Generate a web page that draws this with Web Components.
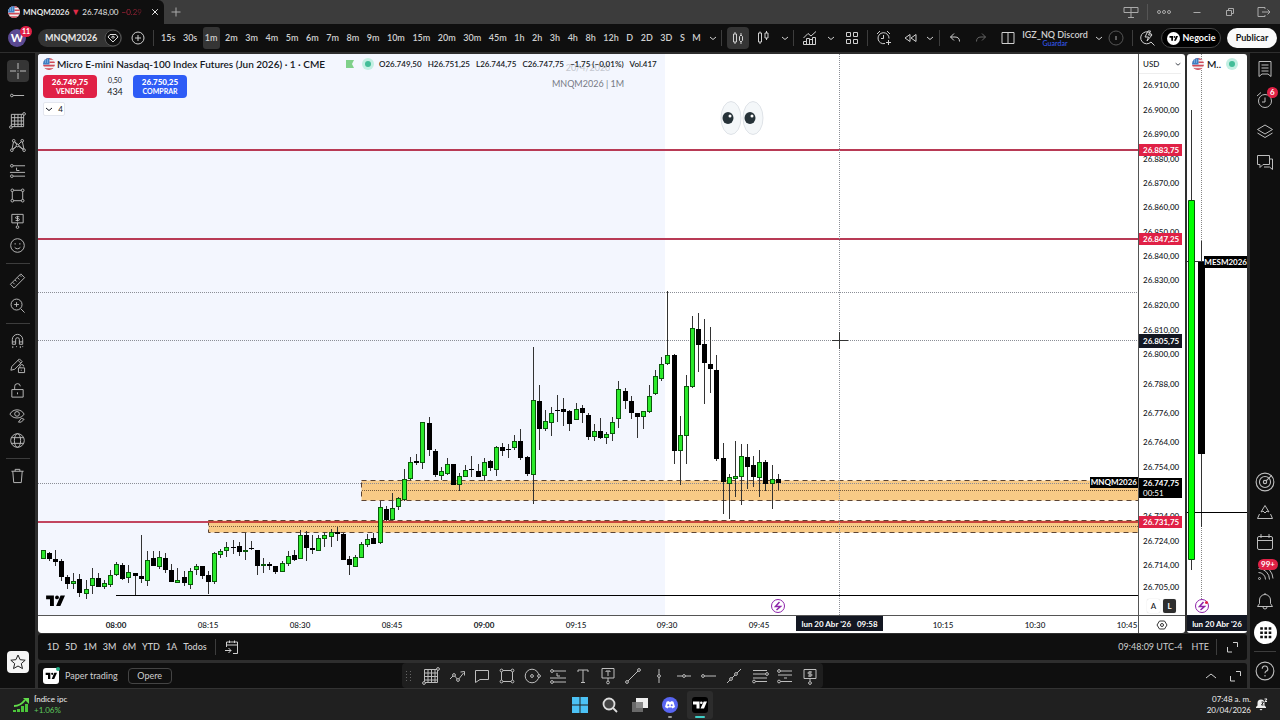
<!DOCTYPE html>
<html lang="es">
<head>
<meta charset="utf-8">
<meta name="viewport" content="width=device-width, initial-scale=1">
<title>MNQM2026 26.748,00</title>
<style>
html, body { margin: 0; height: 100%; }
body { background: #2e2e2e; color: #dbdbdb; font: 9px/12px Lato, "Open Sans", sans-serif; overflow: hidden; }
</style>
</head>
<body>
<trade-app></trade-app>
<script>
const RESET = `
*, *::before { box-sizing: border-box; }
button, select, a { font: inherit; color: inherit; background: none; border: 0; padding: 0; margin: 0; text-decoration: none; appearance: none; }
button { display: inline-flex; align-items: center; justify-content: center; flex: none; white-space: nowrap; cursor: pointer; }
.sep { flex: none; width: 1px; height: 16px; background: #3d3d3d; }
`;
function define(name, css, html, setup) {
  const tpl = document.createElement('template');
  tpl.innerHTML = `<style>${RESET}${css}</style>${html}`;
  customElements.define(name, class extends HTMLElement {
    constructor() {
      super();
      this.attachShadow({ mode: 'open' }).append(tpl.content.cloneNode(true));
    }
    connectedCallback() { if (setup) setup(this, this.shadowRoot); }
  });
}

/* Line icons on an 18 unit grid */
const n = (x, y) => `<circle cx="${x}" cy="${y}" r="1.4" fill="var(--hole, #0f0f0f)"/>`;
const ICONS = {
  cross: '<path d="M9 1v6M9 11v6M1 9h6M11 9h6M9 8.5v1"/>',
  ray: '<path d="M4 9h12"/>' + n(3, 9),
  grid: '<path d="M2.5 2.5h13v13h-13zM6 2.5v13M9.500 2.500v13M13 2.500v13M2.500 6h13M2.500 9.500h13M2.500 13h13"/>' + n(16, 2) + n(2, 16),
  pattern: '<path d="M3 14 5 4l4 5 5-5 2 10-7-5zM3 14l6-5M5 4l11 10"/>' + n(5, 4) + n(14, 4) + n(3, 14) + n(16, 14) + n(9, 9),
  fib: '<path d="M4 4h13M4 15h13M1 11h16M8 6v3h3"/>' + n(3, 4) + n(3, 15),
  rect: '<path d="M3.500 3.500h11v11h-11z"/>' + n(3.5, 3.5) + n(14.5, 3.5) + n(3.5, 14.5) + n(14.5, 14.5),
  price: '<path d="M3 2.500h12v9H3zM9 11.500V14M11 5H8a1 1 0 0 0 0 2h2a1 1 0 0 1 0 2H7M9 4v6"/>' + n(9, 16),
  smile: '<circle cx="9" cy="9" r="7.200"/><path d="M6 11c1.500 2 4.500 2 6 0M6.500 6.500v1.500M11.500 6.500v1.500"/>',
  ruler: '<path d="m1.500 13 11-11 4 4-11 11zM4 11l2 2M6.500 8.500l1.500 1.500M9 6l2 2M11.500 3.500 13 5"/>',
  zoomin: '<circle cx="8" cy="8" r="5.800"/><path d="m12.500 12.500 4 4M8 5.500v5M5.500 8h5"/>',
  magnet: '<path d="M3.500 13V8a5.500 5.500 0 0 1 11 0v5h-3.500V8a2 2 0 0 0-4 0v5zM3.500 10.500H7M11 10.500h3.500M4 15v2M8 15v1M12 15v2M14.500 15v1"/>',
  penlock: '<path d="m2 14 1-4 8-8 3 3-8 8zM9.500 3.500l3 3M10 11.500h6.500v5H10zM11.500 11.500V10a2 2 0 0 1 4 0M13 13.500v1"/>',
  lock: '<path d="M3 8h12v8H3zM6 8V5a3 3 0 0 1 6-.5M9 11v2"/>',
  eye: '<path d="M1 7.500C4 1.500 13 1.500 16 7.500 13 13 4 13 1 7.500zM10 16l3-4 3 1-3 3z"/><circle cx="8.500" cy="7.300" r="2.500"/>',
  globe: '<circle cx="9" cy="9" r="7.200"/><ellipse cx="9" cy="9" rx="3.300" ry="7.200"/><path d="M2.500 6h13M2.500 12h13"/>',
  trash: '<path d="M2.500 4.500h13M6.500 4.500V2.500h5v2M4 4.500l1 12h8l1-12"/>',
  star: '<path d="m9 2 2.100 4.700 5.100.5-3.900 3.400 1.200 5L9 13l-4.500 2.600 1.200-5L1.800 7.200l5.100-.5z"/>',
  list: '<path d="M3 1.500h12v15l-3-2.500H6l-3 2.500zM5.500 5h7M5.500 8h7M5.500 11h7"/>',
  alarm: '<circle cx="9" cy="10" r="6.500"/><path d="M9 6.500V11H6M1 5l4-3.500M17 5l-4-3.500"/>',
  alarmplus: '<path d="M10 14.500A5.500 5.500 0 1 1 14 9.500M8.500 6v3.500H6M2 5l3-3M15 5l-3-3M13.500 11v5M11 13.500h5"/>',
  layers: '<path d="m9 3 7.500 4.500L9 12 1.500 7.500zM1.500 11 9 15.500 16.500 11"/>',
  chat: '<path d="M1.500 2.500h12v9H7l-3 3v-3H1.500zM13.500 6h3v10.500L13.500 14H8"/>',
  target: '<circle cx="9" cy="9" r="8"/><circle cx="9" cy="9" r="5"/><circle cx="9" cy="9" r="1.500"/><path d="m10 8 5-5"/>',
  peaks: '<path d="m5 9 4-6.500L13 9l-2-1-2 2-2-2zM3.500 11 1.500 15.500h15L14.500 11"/>',
  calendar: '<rect x="1.500" y="3.500" width="15" height="13" rx="1.500"/><path d="M1.500 7.500h15M5 1v4M13 1v4"/>',
  feed: '<path d="M2.500 5.500a11 11 0 0 1 11 11M2.500 9.500a7 7 0 0 1 7 7M6 2.500a14 14 0 0 1 11 13"/><circle cx="3.500" cy="15.500" r="1"/>',
  bell: '<path d="M1.500 13.500h15L14.500 10.500V7a5.500 5.500 0 0 0-11 0v3.500zM7 14a2 2 0 0 0 4 0M9 1.500V0"/>',
  apps: '<g fill="#0f0f0f" stroke="none"><path d="M4 4h2.500v2.500H4zM8 4h2.500v2.500H8zM12 4h2.500v2.500H12zM4 8h2.500v2.500H4zM8 8h2.500v2.500H8zM12 8h2.500v2.500H12zM4 12h2.500v2.500H4zM8 12h2.500v2.500H8zM12 12h2.500v2.500H12z"/></g>',
  help: '<circle cx="9" cy="9" r="8"/><path d="M6.500 7a2.500 2.500 0 1 1 3.500 2.300c-.7.400-1 .7-1 1.700M9 12.500V14"/>',
  chevron: '<path d="m6 8 3 2.500L12 8"/>',
  up: '<path d="m4 11 5-4 5 4"/>',
  plus: '<path d="M9 4.500v9M4.500 9h9"/>',
  pluscircle: '<circle cx="9" cy="9" r="6"/><path d="M9 6v6M6 9h6"/>',
  gem: '<circle cx="9" cy="9" r="8" fill="#0f0f0f" stroke="#555"/><path d="m6 5.500h6l2 2.500-5 5-5-5zM7.500 8 9 9.500 10.500 8 9 7z"/>',
  candles: '<path d="M4.500 5h3v8h-3zM6 3v2M6 13v2M10.500 7.500 12 6l1.500 1.500v4L12 13l-1.500-1.500zM12 4v2M12 13v2"/>',
  hollow: '<path d="M4.500 4h3v9h-3zM6 2.500V4M6 13v2M11 4h3v5h-3zM12.500 2v2M12.500 9v2"/>',
  indicators: '<path d="M2.500 15.500v-3h3v-3h3v1h3v-2h3v7zM5.500 12v3.500M8.500 10v5.500M11.500 9v6.500M2.500 9 7 4.500l3 2.500 5-4.500"/>',
  squares: '<path d="M3.500 3.500h4v4h-4zM10.500 3.500h4v4h-4zM3.500 10.500h4v4h-4zM10.500 10.500h4v4h-4z"/>',
  rewind: '<path d="M9 5.500v7L4 9zM15 5.500v7L10 9z"/>',
  undo: '<path d="M8 4.500 4.500 8 8 11.500M4.500 8H9c3 0 4.500 1.500 4.500 4.500"/>',
  redo: '<path d="M10 4.500 13.500 8 10 11.500M13.500 8H9c-3 0-4.500 1.500-4.500 4.500"/>',
  layout: '<path d="M3 3.500h12v11H3zM9 3.500v11"/>',
  info: '<circle cx="9" cy="9" r="7" stroke="#555"/><path d="M9 7v4"/>',
  quick: '<path d="M14 6A6 6 0 1 0 13 13l3.500 3.500M10 2 7 8h3.500L9 12l5-6h-3.500l2-4z"/>',
  screens: '<path d="M2 4.500h14v5H2zM9 4.500v10M6 14.500h6"/>',
  dots: '<circle cx="4" cy="9" r="1.500"/><circle cx="9" cy="9" r="1.500"/><circle cx="14" cy="9" r="1.500"/>',
  min: '<path d="M5.500 9.500h7"/>',
  restore: '<path d="M5.500 7.500h5v5h-5zM7.500 7V5.500h5v5H11"/>',
  exit: '<path d="M11 6V4.500H4v9h7V12M8 9h8M13.500 6.500 16 9l-2.500 2.500"/>',
  close: '<path d="m6.200 6.200 5.600 5.600M11.800 6.200l-5.600 5.600"/>',
  goto: '<path d="M4.500 9V4h11v11.500H11M4.500 7h11M7.500 2.500V5M12.500 2.500V5M3 12.500h6M6.500 10l2.500 2.500L6.500 15"/>',
  expand: '<path d="M10 4.500h4.500V9M4.500 9v5H9"/>',
  path: '<path d="m2 12 4-4 4 5 5.500-7M12.500 5l4-.5v4"/>' + n(6, 8) + n(10, 13),
  note: '<path d="M2.500 3.500h13v9H7l-4.500 3z"/>',
  circle: '<circle cx="9" cy="9" r="6.800"/>' + n(9, 9) + n(16, 9),
  text: '<path d="M4 5V3h10v2M9 3v12.500M7 15.500h4"/>',
  textbox: '<path d="M3 1.500h12v9.500H3zM7 5V4h4v1M9 4v5M9 11v3"/>' + n(9, 15.5),
  trend: '<path d="M3 15 15 3"/>' + n(3, 15) + n(15, 3),
  vline: '<path d="M9 2v14"/>' + n(9, 9),
  hline: '<path d="M2 9h14"/>' + n(9, 9),
  extended: '<path d="M2 16 16 2"/>' + n(6, 12) + n(11, 7),
  levels: '<path d="M2 3.500h14M2 7h14M2 11h14M4 14.500h12"/>' + n(16, 7) + n(3, 14.5),
  channel: '<path d="M4 4h12M2 8h14M8 11h3M4 14.500h12"/>' + n(3, 4) + n(3, 14.5),
  grip: '<g fill="#666" stroke="none"><path d="M6 4h1v1H6zM10 4h1v1h-1zM6 7h1v1H6zM10 7h1v1h-1zM6 10h1v1H6zM10 10h1v1h-1zM6 13h1v1H6zM10 13h1v1h-1z"/></g>',
  hex: '<path d="M6.500 5h5l2.500 4-2.500 4h-5L4 9z"/><circle cx="9" cy="9" r="1.500"/>',
  tv: '<g fill="currentColor" stroke="none"><path d="M1 4h7v9.500H4.500V7.500H1zM14 4h4l-4.200 9.500H10z"/><circle cx="10.800" cy="5.800" r="1.700"/></g>',
  bolt: '<circle cx="9" cy="9" r="6.500"/><path d="M10.500 5 6.500 9.500h5L7.500 13" stroke-width="1.500"/>',
};
customElements.define('line-icon', class extends HTMLElement {
  connectedCallback() {
    if (this.shadowRoot) return;
    const s = +this.getAttribute('size') || 18;
    this.attachShadow({ mode: 'open' }).innerHTML = `<style>:host{display:inline-flex;flex:none}svg{display:block;fill:none;stroke:currentColor;stroke-width:1}</style><svg width="${s}" height="${s}" viewBox="0 0 18 18" aria-hidden="true">${ICONS[this.getAttribute('name')]}</svg>`;
  }
});
define('us-flag', ':host{display:inline-flex;flex:none}', `
<svg width="12" height="12" viewBox="0 0 12 12" aria-hidden="true"><defs><clipPath id="c"><circle cx="6" cy="6" r="6"/></clipPath></defs>
<g clip-path="url(#c)"><path fill="#f0eef0" d="M0 0h12v12H0z"/><path fill="#cf4a57" d="M0 0h12v1.700H0zM0 3.400h12v1.700H0zM0 6.800h12v1.700H0zM0 10.200h12V12H0z"/><path fill="#3c7fc4" d="M0 0h6.500v6.500H0z"/><path stroke="#a9cdec" stroke-dasharray="1 1" d="M0 2h6.500M0 4h6.500"/></g></svg>`);

define('title-bar', `
:host { display: flex; align-items: center; height: 24px; flex: none; background: #3c3c3c; color: #aaa; }
.tab { display: flex; align-items: center; align-self: stretch; width: 164px; padding: 0 0 0 8px; background: #0f0f0f; color: #e6e6e6; border-radius: 0 6px 0 0; font-size: 8px; }
b { margin-left: 3px; }
.down { color: #e02b48; width: 13px; text-align: center; font-size: 9px; }
.pct { margin: 0 auto 0 3px; white-space: nowrap; background: linear-gradient(90deg, #e02b48, #5a1a24); background-clip: text; -webkit-background-clip: text; color: transparent; }
.fill { flex: 1; }
.win { display: flex; align-items: center; gap: 15px; padding-right: 8px; }
.sep { background: #555; margin: 0 -8px; }
`, `<div class="tab"><us-flag></us-flag><b>MNQM2026</b><span class="down">▼</span><span>26.748,00</span><span class="pct">−0.29</span><button aria-label="Cerrar"><line-icon name="close"></line-icon></button></div>
<button aria-label="Nueva" style="width:24px"><line-icon name="plus"></line-icon></button><span class="fill"></span>
<div class="win"><button><line-icon name="screens"></line-icon></button><span class="sep"></span><button><line-icon name="dots"></line-icon></button><button><line-icon name="min"></line-icon></button><button><line-icon name="restore"></line-icon></button><button><line-icon name="exit"></line-icon></button></div>`);

define('top-toolbar', `
:host { display: flex; align-items: center; height: 28px; flex: none; background: #0f0f0f; color: #d0d0d0; padding: 0 3px 0 8px; font-weight: 500; }
.avatar { position: relative; width: 18px; height: 18px; border-radius: 50%; background: #5b4a93; color: #fff; font-size: 12px; font-weight: 700; }
.avatar i { position: absolute; right: -6px; top: -3px; padding: 0 2px; border-radius: 6px; background: #e02146; font: 700 7px/11px Lato, sans-serif; }
.symbol { width: 84px; height: 18px; margin-left: 12px; border-radius: 9px; background: #333; font-weight: 700; justify-content: space-between; padding-left: 7px; color: #e6e6e6; }
.symbol line-icon { color: #ddd; }
.ints { display: flex; justify-content: space-between; width: 544px; margin: 0 2px 0 5px; }
.ints button { height: 22px; padding: 0 2px; border-radius: 3px; font-weight: 600; }
.ints .on, .on { background: #353535; }
.candle { width: 22px; height: 22px; border-radius: 4px; }
.fill { flex: 1; }
.name { display: grid; text-align: center; line-height: 9px; font-weight: 600; width: 66px; white-space: nowrap; }
.name small { font-size: 7px; line-height: 8px; color: #2f51e0; }
.neg { width: 60px; height: 20px; border: 1px solid #444; border-radius: 10px; background: #000; color: #fff; font-weight: 700; gap: 3px; }
.neg span { display: flex; border-radius: 50%; background: #fff; color: #000; padding: 2px; }
.pub { width: 50px; height: 20px; border-radius: 10px; background: #fafafa; color: #111; font-weight: 700; margin-left: 6px; }
.dim { color: #666; }
`, `<button class="avatar">W<i>11</i></button><button class="symbol">MNQM2026<line-icon name="gem"></line-icon></button>
<button style="width:31px"><line-icon name="pluscircle"></line-icon></button><span class="sep"></span>
<div class="ints"></div><button style="width:16px" aria-label="Intervalos"><line-icon name="chevron"></line-icon></button>
<span class="sep"></span><button class="candle on" style="margin-left:5px"><line-icon name="candles"></line-icon></button><button style="width:28px"><line-icon name="hollow"></line-icon></button><button style="width:16px"><line-icon name="chevron"></line-icon></button>
<span class="sep"></span><button style="width:32px"><line-icon name="indicators"></line-icon></button><button style="width:10px"><line-icon name="chevron"></line-icon></button><button style="width:31px"><line-icon name="squares"></line-icon></button>
<span class="sep"></span><button style="width:31px"><line-icon name="alarmplus"></line-icon></button><button style="width:21px"><line-icon name="rewind"></line-icon></button><button style="width:19px"><line-icon name="chevron"></line-icon></button>
<span class="sep"></span><button style="width:30px"><line-icon name="undo"></line-icon></button><button class="dim" style="width:21px"><line-icon name="redo"></line-icon></button><span class="fill"></span>
<button style="width:28px"><line-icon name="layout"></line-icon></button><button class="name"><span>IGZ_NQ Discord</span><small>Guardar</small></button><button style="width:21px"><line-icon name="chevron"></line-icon></button><button style="width:14px;color:#aaa"><line-icon name="info"></line-icon></button>
<span class="sep" style="margin-left:9px"></span><button style="width:28px"><line-icon name="quick"></line-icon></button>
<button class="neg"><span><line-icon name="tv" size="9"></line-icon></span>Negocie</button><button class="pub">Publicar</button>`,
(_, root) => {
  root.querySelector('.ints').innerHTML = '15s 30s 1m 2m 3m 4m 5m 6m 7m 8m 9m 10m 15m 20m 30m 45m 1h 2h 3h 4h 8h 12h D 2D 3D S M'
    .split(' ').map(t => `<button${t === '1m' ? ' class="on"' : ''}>${t}</button>`).join('');
});

define('tool-rail', `
:host { display: flex; flex-direction: column; align-items: center; width: 35px; flex: none; background: #0f0f0f; color: #bdbdbd; padding: 5px 0 15px; }
.tools { display: flex; flex-direction: column; align-items: center; flex: 1; }
.tools button { width: 25px; height: 25px; }
.on line-icon { background: #353535; border-radius: 4px; padding: 2px; }
hr { width: 24px; height: 1px; border: 0; margin: 5px 0 4px; background: #3d3d3d; flex: none; }
`, `<div class="tools"></div><slot></slot>`,
(_, root) => {
  const names = 'cross ray grid pattern fib rect price smile | ruler zoomin | magnet penlock lock eye globe | trash'.split(' ');
  root.querySelector('.tools').innerHTML = names.map(k => k === '|' ? '<hr>' : `<button aria-label="${k}"${k === 'cross' ? ' class="on"' : ''}><line-icon name="${k}"${k === 'cross' ? '' : ' size="17"'}></line-icon></button>`).join('');
});

define('side-rail', `
:host { display: flex; flex-direction: column; align-items: center; width: 30px; flex: none; background: #0f0f0f; color: #bdbdbd; padding: 1px 0 2px; }
button { width: 30px; height: 30px; position: relative; }
.top { display: grid; grid-auto-rows: 31px; }
i { position: absolute; left: 17px; top: 2px; padding: 0 3px; border-radius: 6px; background: #e02146; color: #fff; font: 700 8px/11px Lato, sans-serif; }
.wide { left: 8px; }
.fill { flex: 1; }
.apps line-icon { background: #fff; border-radius: 50%; padding: 2px; }
hr { width: 22px; height: 1px; border: 0; margin: 4px 0; background: #3d3d3d; flex: none; }
`, `<div class="top"><button><line-icon name="list"></line-icon></button><button><line-icon name="alarm"></line-icon><i>6</i></button><button><line-icon name="layers"></line-icon></button><button><line-icon name="chat"></line-icon></button></div>
<span class="fill"></span>
<button><line-icon name="target" size="20"></line-icon></button><button><line-icon name="peaks"></line-icon></button><button><line-icon name="calendar"></line-icon></button><button><line-icon name="feed"></line-icon><i class="wide">99+</i></button><button><line-icon name="bell"></line-icon></button><button class="apps"><line-icon name="apps" size="19"></line-icon></button><hr><button><line-icon name="help" size="20"></line-icon></button>`);

/* Candles run minute by minute from 07:48. Each row is
   colour, high, body top, body bottom, low, in thirds of a unit below the block's base. */
const BLOCKS = [
  [380, 'G510 510 536 536,B516 519 537 543,B510 537 545 557,B537 543 590 603,B585 591 611 626,G578 603 611 628,B582 597 638 651,G600 626 641 656,G564 594 617 641,B578 594 620 622,G600 608 622 628,G570 584 614 620,G547 552 584 588,B550 554 596 599,G555 576 594 609,B578 580 588 645,B464 588 597 609,G513 541 602 619,B513 534 557 558,G513 531 560 567,B519 534 571 579,B553 570 605 607,G563 599 608 608,B572 590 608 617,G565 574 615 626,G553 558 570 586,B558 558 588 596,B574 586 605 643,G517 520 605 613,G508 514 525 533,G487 502 512 530,B480 501 504 521,B487 498 516 528,G458 510 517 541,B482 505 508 510,B510 510 558 585,G535 552 558 579,B545 551 559 569,B558 558 576 581,G543 550 575 575,G513 528 551 557,B510 525 540 543,G449 464 536 536,B452 465 503 543,B466 504 511 522,G466 475 514 514,G455 464 478 500,G448 457 472 501,B440 456 461 482,B458 461 540 540,B528 536 555 585,G524 531 560 560,G486 493 533 533,G462 476 495 502,B458 473 493 493'],
  [330, 'G513 531 639 643,B527 537 571 572,G489 533 571 571,G500 505 531 541,G417 447 511 513,G382 397 447 449,B373 394 399 404,G277 277 400 418,B260 280 360 378,B358 363 434 440,G410 424 437 449,G384 403 432 434,B402 402 465 465,G429 439 466 483,G406 419 440 442,B378 417 420 440,B403 423 440 442,G385 397 437 454,B390 394 413 423,G348 352 419 438,B340 352 363 378,B343 357 360 383,G314 332 353 360,B298 333 384 389,B378 381 432 437,G52 211 435 521,B166 212 297 360,G240 272 298 302,G230 248 279 319,B196 241 244 276,B204 238 245 287,B240 243 282 302,G220 237 269 270,B225 234 248 278,B250 256 321 330,G281 303 321 333,B265 304 324 328,G306 312 325 343,G262 275 311 333,G153 178 268 293,B173 184 212 237,B198 213 248 267,B249 249 262 325,G242 244 262 296,G165 199 245 250,G120 139 193 194,G82 103 146 152'],
  [280, 'G32 226 253 255,B222 225 512 553,G408 465 512 614,G284 317 469 553,G108 145 321 325,B99 147 194 275,B118 192 250 372,B140 252 268 338,B224 270 537 542,B490 534 606 702,G582 591 611 718,G484 589 596 652,G492 529 590 674,B492 531 560 626,B529 556 590 621,G510 545 593 650,B539 545 612 633,G554 597 611 686,B582 597 608 629'],
];
function drawCandles() {
  let i = -12, out = '';
  for (const [base, rows] of BLOCKS) for (const row of rows.split(',')) {
    const [h, t, b, l] = row.slice(1).split(' ').map(v => Math.round(base + v / 3));
    const x = Math.round(116.2 + 6.125 * i++);
    out += `<path d="M${x + .5} ${h}V${l}" stroke="#333"/>`;
    out += row[0] === 'G'
      ? `<rect x="${x - 1.5}" y="${t + .5}" width="4" height="${Math.max(1, b - t - 1)}" fill="#2bea2b" stroke="#0a5a0a"/>`
      : `<rect x="${x - 2}" y="${t}" width="5" height="${Math.max(1, b - t)}" fill="#000"/>`;
  }
  return out;
}

define('price-plot', `
:host { position: relative; display: block; min-width: 0; min-height: 0; background: #fff; color: #131722; overflow: hidden; }
.plot { position: absolute; inset: 0; width: 100%; height: 100%; }
.legend { position: relative; display: flex; align-items: center; height: 20px; padding-left: 5px; white-space: nowrap; }
h1 { font: 10px/14px Lato, sans-serif; font-weight: 600; margin: 0 2px; min-width: 287px; }
.ok { width: 6px; height: 6px; border-radius: 50%; background: #42bd98; box-shadow: 0 0 0 3px #c3efe3; margin: 0 8px 0 11px; }
.mk { width: 8px; height: 8px; background: #7fd08a; clip-path: polygon(0 0, 100% 0, 75% 50%, 100% 100%, 0 100%); }
.ohlc { display: flex; gap: 6px; font-size: 8px; font-weight: 600; }
.trade { position: relative; display: flex; align-items: center; margin: 1px 0 4px 5px; }
.trade button { display: grid; width: 54px; height: 23px; border-radius: 4px; color: #fff; background: #e02146; font: 700 7px/9px Lato, sans-serif; align-content: center; }
.trade button b { font-size: 8px; line-height: 9px; }
.trade .buy { background: #2e5cf6; }
.spread { width: 36px; text-align: center; font-size: 9px; line-height: 13px; }
.spread small { display: block; font-size: 7px; line-height: 10px; }
.more { position: relative; margin-left: 5px; width: 22px; height: 14px; background: #fff; border: 1px solid #e3e6ee; border-radius: 2px; font-size: 8px; }
.more line-icon { margin: 0 0 0 -5px; }
.mark { position: absolute; left: 50%; top: 6px; width: 120px; margin-left: -60px; text-align: center; color: #777b86; line-height: 16px; }
.mark span { display: block; color: #c4c7cf; }
.tv { position: absolute; left: 7px; bottom: 4px; color: #000; }
.bolt { position: absolute; left: 67.273%; bottom: 0; margin-left: -9px; color: #8e24aa; }
.tag { position: absolute; right: 0; top: 76.300%; margin-top: -5px; padding: 0 1px; background: #000; color: #fff; font: 700 8px/11px Lato, sans-serif; }
`, `<svg class="plot" viewBox="38 54 1100 561" preserveAspectRatio="none" fill="none">
<path fill="#f3f6fe" d="M38 54h627v561H38z"/>
<g fill="#f8ca86" stroke="#5c4433" stroke-dasharray="5 4"><path d="M361.500 480.500h780v20h-780zM208.500 520.500h940v12h-940z"/></g>
<path stroke="#b83a55" stroke-width="2" d="M38 150h1100M38 239h1100"/><path stroke="#c2455f" stroke-width="2" d="M38 522h171"/><path stroke="#c8463c" stroke-width="2" d="M208 522h930"/>
<path stroke="#000" d="M116 595.500h1022"/>
<g stroke="#8b8e96" stroke-dasharray="1 1"><path d="M38 292.500h1100M38 340.500h1100M38 483.500h1100M839.500 54v561"/><path stroke="#7a5c3a" d="M362 490.500h776M209 526.500h929"/></g>
<g class="candles"></g>
<path stroke="#333" d="M832 340.500h16M839.500 332v17"/>
<g stroke="#dfe3e8" fill="#f4f7f9"><ellipse cx="731" cy="118" rx="10" ry="16.500"/><ellipse cx="753" cy="118" rx="10" ry="16.500"/></g>
<g fill="#263238"><ellipse cx="728" cy="118" rx="5.500" ry="6"/><ellipse cx="750" cy="118" rx="5.500" ry="6"/></g><g fill="#fff"><circle cx="730" cy="116" r="1.500"/><circle cx="752" cy="116" r="1.500"/></g>
</svg>
<div class="mark"><span>20/4/2026</span>MNQM2026 | 1M</div>
<div class="legend"><us-flag></us-flag><h1>Micro E-mini Nasdaq-100 Index Futures (Jun 2026) · 1 · CME</h1><span class="mk"></span><span class="ok"></span>
<div class="ohlc"><span>O26.749,50</span><span>H26.751,25</span><span>L26.744,75</span><span>C26.747,75</span><span>−1,75 (−0,01%)</span><span>Vol.417</span></div></div>
<div class="trade"><button><b>26.749,75</b>VENDER</button><div class="spread"><small>0,50</small>434</div><button class="buy"><b>26.750,25</b>COMPRAR</button></div>
<button class="more"><line-icon name="chevron"></line-icon>4</button>
<line-icon class="tv" name="tv" size="20"></line-icon><line-icon class="bolt" name="bolt"></line-icon><span class="tag">MNQM2026</span>`,
(_, root) => {
  const svg = new DOMParser().parseFromString(`<svg xmlns="http://www.w3.org/2000/svg">${drawCandles()}</svg>`, 'image/svg+xml');
  root.querySelector('.candles').replaceChildren(...svg.documentElement.childNodes);
});

define('price-axis', `
:host { position: relative; display: block; background: #fff; color: #131722; border-left: 1px solid #555; overflow: hidden; font-size: 8px; font-weight: 500; }
.p { position: absolute; left: 0; width: 43px; padding-left: 4px; line-height: 12px; top: calc(var(--y) * 100% / 561); margin-top: -6px; }
.red { background: #e02146; color: #fff; font-weight: 700; }
.dark { background: #131722; color: #fff; font-weight: 700; line-height: 14px; margin-top: -7px; }
.now { background: #000; color: #fff; line-height: 10px; margin-top: -6px; font-weight: 700; } .now span { display: block; font-weight: 400; }
select { position: relative; display: block; width: 42px; height: 20px; padding-left: 4px; border-bottom: 1px solid #eee; }
.drop { position: absolute; right: 0; top: 3px; }
.modes { position: absolute; left: 8px; bottom: 2px; display: flex; gap: 3px; }
.modes button { width: 13px; height: 14px; border-radius: 2px; box-shadow: 0 0 1px #bbb; }
.modes .on { background: #2e2e2e; color: #fff; font-weight: 700; }
`, `<select aria-label="Moneda"><option>USD</option></select><line-icon class="drop" name="chevron" size="14"></line-icon><div class="list"></div><div class="modes"><button>A</button><button class="on">L</button></div>`,
(_, root) => {
  const ticks = [['910', 31], ['900', 56], ['890', 80], ['880', 105], ['870', 129], ['860', 153], ['850', 178], ['840', 202], ['830', 226], ['820', 251], ['810', 276], ['800', 300], ['788', 330], ['776', 359], ['764', 388], ['754', 413], ['734', 462], ['724', 487], ['714', 511], ['705', 533]];
  const tags = [['red', '26.883,75', 96], ['red', '26.847,25', 185], ['dark', '26.805,75', 287], ['now', '26.747,75<span>00:51</span>', 430], ['red', '26.731,75', 468]];
  root.querySelector('.list').innerHTML = ticks.map(([t, y]) => `<div class="p" style="--y:${y}">26.${t},00</div>`).join('') +
    tags.map(([c, t, y]) => `<div class="p ${c}" style="--y:${y}">${t}</div>`).join('');
});

define('time-axis', `
:host { position: relative; display: block; background: #fff; color: #131722; border-top: 1px solid #555; overflow: hidden; font-size: 8px; line-height: 18px; border-radius: 0 0 0 3px; font-weight: 500; }
.t { position: absolute; left: calc(var(--x) * 100% / 1100); width: 30px; margin-left: -15px; text-align: center; }
.t.h { font-weight: 700; }
.tag { position: absolute; left: calc(802 * 100% / 1100); width: 87px; margin-left: -44px; height: 15px; line-height: 17px; background: #131722; color: #fff; font-weight: 700; text-align: center; white-space: pre; }
`, `<div class="list"></div><div class="tag">lun 20 Abr '26   09:58</div>`,
(_, root) => {
  root.querySelector('.list').innerHTML = '08:00 08:15 08:30 08:45 09:00 09:15 09:30 09:45 - 10:15 10:30 10:45'.split(' ')
    .map((t, i) => t === '-' ? '' : `<span class="t${t.endsWith(':00') ? ' h' : ''}" style="--x:${Math.round(78 + 91.9 * i)}">${t}</span>`).join('');
});

define('mini-chart', `
:host { display: grid; grid-template-rows: 1fr 18px; width: 60px; background: #fff; color: #131722; border-radius: 3px; overflow: hidden; position: relative; }
.plot { position: relative; min-height: 0; }
svg.plot { position: absolute; left: 0; top: 0; width: 60px; height: 100%; }
.head { position: relative; display: flex; align-items: center; height: 20px; padding-left: 5px; gap: 3px; font-size: 10px; font-weight: 600; }
.ok { width: 6px; height: 6px; border-radius: 50%; background: #42bd98; box-shadow: 0 0 0 3px #c3efe3; margin-left: 5px; }
.tag { position: absolute; right: 0; top: 37%; margin-top: -6px; background: #000; color: #fff; font: 700 8px/12px Lato, sans-serif; }
.bolt { position: absolute; left: 6px; bottom: 0; color: #8e24aa; }
.dot { position: absolute; left: 18px; bottom: 11px; width: 3px; height: 3px; border-radius: 50%; background: #e02146; }
.time { background: #131722; color: #fff; font-weight: 700; font-size: 8px; line-height: 18px; text-align: center; border-bottom: 2px solid #fff; white-space: nowrap; }
`, `<div class="plot"><svg class="plot" viewBox="1187 54 60 561" preserveAspectRatio="none"><g stroke="#333"><path stroke-dasharray="1 1" stroke="#888" d="M1201.500 54v546"/><path d="M1191.500 110v460M1201.500 241v286M1187 261.500h18"/><path stroke="#000" d="M1187 512.500h60"/></g><path fill="#0f0" stroke="#085008" d="M1188.500 200.500h6v359h-6z"/><path fill="#000" d="M1198 262h7v192h-7z"/></svg>
<div class="head"><us-flag></us-flag>M..<span class="ok"></span></div><span class="tag">MESM2026</span><line-icon class="bolt" name="bolt"></line-icon><i class="dot"></i></div><div class="time">lun 20 Abr '26</div>`);

define('range-bar', `
:host { display: flex; align-items: center; height: 26px; flex: none; background: #0f0f0f; color: #d0d0d0; padding: 0 6px 0 9px; border-radius: 3px; }
nav { display: flex; gap: 6px; margin-right: 8px; font-weight: 500; }
.fill { flex: 1; }
.sep { margin: 0 6px; }
.right { display: flex; gap: 9px; margin-right: 1px; }
`, `<nav></nav><span class="sep" style="margin-left:0"></span><button aria-label="Ir a la fecha"><line-icon name="goto"></line-icon></button><span class="fill"></span><div class="right"><button>09:48:09 UTC-4</button><button>HTE</button></div><span class="sep"></span><button><line-icon name="expand"></line-icon></button>`,
(_, root) => { root.querySelector('nav').innerHTML = '1D 5D 1M 3M 6M YTD 1A Todos'.split(' ').map(t => `<button>${t}</button>`).join(''); });

define('paper-bar', `
:host { display: grid; grid-template-columns: 364px auto 1fr; align-items: center; height: 25px; flex: none; background: #0f0f0f; color: #d0d0d0; border-radius: 3px 3px 0 0; }
.left { display: flex; align-items: center; gap: 6px; padding-left: 5px; font-size: 9px; }
.logo { position: relative; display: flex; align-items: center; justify-content: center; width: 16px; height: 16px; border-radius: 3px; background: #fff; color: #000; }
.logo::after { content: ""; position: absolute; right: -1px; top: -1px; width: 4px; height: 4px; border-radius: 50%; background: #22ab84; }
.opere { width: 44px; height: 16px; border: 1px solid #444; border-radius: 4px; margin-left: 4px; }
.draw { display: flex; align-items: center; justify-content: space-between; width: 421px; height: 25px; background: #1e1e1e; border-radius: 4px; padding: 0 4px 0 0; --hole: #1e1e1e; color: #bdbdbd; }
.draw button:first-child { width: 13px; }
.right { display: flex; justify-content: flex-end; gap: 6px; padding-right: 3px; }
`, `<div class="left"><span class="logo"><line-icon name="tv" size="12"></line-icon></span>Paper trading<button class="opere">Opere</button></div><div class="draw"></div><div class="right"><button><line-icon name="up"></line-icon></button><button><line-icon name="expand"></line-icon></button></div>`,
(_, root) => {
  root.querySelector('.draw').innerHTML = 'grip grid path note rect circle fib text textbox trend vline hline ray extended levels channel price'.split(' ')
    .map(k => `<button aria-label="${k}"><line-icon name="${k}"></line-icon></button>`).join('');
});

define('task-bar', `
:host { display: grid; grid-template-columns: 1fr auto 1fr; align-items: center; height: 32px; flex: none; background: #202020; border-top: 1px solid #333; color: #eee; font: 8px/11px Lato, sans-serif; }
.widget { display: flex; align-items: center; gap: 5px; padding-left: 13px; } .widget span span { color: #5ec95e; display: block; }
.apps { display: flex; gap: 4px; }
.apps button { width: 26px; height: 28px; position: relative; border-radius: 3px; }
.apps .on { background: #2c2c2c; }
.apps .run::after { content: ""; position: absolute; bottom: 1px; width: 4px; height: 2px; background: #999; border-radius: 1px; }
.apps .on::after { width: 10px; background: #3fd0c9; }
.clock { display: flex; justify-content: flex-end; align-items: center; gap: 4px; text-align: right; padding-right: 12px; }
`, `<div class="widget"><svg width="16" height="16" viewBox="0 0 16 16"><path fill="#4bc63a" d="M0 13h3v2H0zM4 12h3v3H4zM8 9h3v6H8zM12 7h3v8h-3z"/><path fill="none" stroke="#62dc4a" stroke-width="2" d="M1 9c5 0 8-2 11-6"/><path fill="#62dc4a" d="M10 1h6v6z"/></svg><span>Índice ipc<span>+1.06%</span></span></div>
<div class="apps"><button aria-label="Inicio"><svg width="16" height="16" viewBox="0 0 16 16" fill="#4cc2f5"><path d="M0 0h7.500v7.500H0zM8.500 0H16v7.500H8.500zM0 8.500h7.500V16H0zM8.500 8.500H16V16H8.500z"/></svg></button>
<button aria-label="Buscar"><svg width="16" height="16" viewBox="0 0 16 16" fill="#444" stroke="#ddd" stroke-width="1.800"><circle cx="7" cy="7" r="5.500"/><path d="m11 11 4 4"/></svg></button>
<button aria-label="Vistas"><svg width="18" height="16" viewBox="0 0 18 16"><path fill="#eee" d="M5 1h12v10H5z"/><path fill="#777" fill-opacity=".85" d="M1 5h11v10H1z"/></svg></button>
<button class="run" aria-label="Discord"><svg width="16" height="16" viewBox="0 0 16 16"><circle cx="8" cy="8" r="8" fill="#5865f2"/><path fill="#fff" d="M4.500 4.800 6.500 4l.5.800h2l.5-.8 2 .8L13 10l-2.500 1.500-.7-1H6.200l-.7 1L3 10z"/><circle cx="6.300" cy="8.300" r="1" fill="#5865f2"/><circle cx="9.700" cy="8.300" r="1" fill="#5865f2"/></svg></button>
<button class="run on" aria-label="TradingView"><svg width="16" height="16" viewBox="0 0 16 16"><rect width="16" height="16" rx="3"/><path fill="#fff" d="M1 4.500h6.500v7H4.500v-4H1zM11.700 4.500H15l-3 7H8.500z"/><circle cx="9.300" cy="5.800" r="1.300" fill="#fff"/></svg></button></div>
<div class="clock"><span>07:48 a. m.<br>20/04/2026</span><svg width="13" height="13" viewBox="0 0 13 13"><path fill="#eee" d="M1 10V9l1.500-1.500V5a3.500 3.500 0 0 1 7 0v2.500L11 9v1zM4.500 11h3l-1.500 1.500z"/><path fill="none" stroke="#202020" d="M6.500 4h2L6.500 7h2"/><path fill="none" stroke="#eee" d="M9.500 1H12L10 3.500h2"/></svg></div>`);

define('trade-app', `
:host { display: flex; flex-direction: column; height: 100vh; }
main { display: flex; flex: 1; min-height: 0; gap: 3px; }
.mid { display: flex; flex-direction: column; gap: 3px; flex: 1; min-width: 0; }
.charts { flex: 1; min-height: 0; display: grid; grid-template-columns: minmax(0, 1fr) auto; gap: 2px; padding-top: 2px; margin-bottom: -2px; }
.main { display: grid; grid-template-columns: minmax(0, 1fr) 47px; grid-template-rows: minmax(0, 1fr) 18px; min-height: 0; border-radius: 3px; overflow: hidden; }
.corner { background: #fff; color: #333; border-top: 1px solid #555; border-left: 1px solid #555; display: flex; align-items: center; justify-content: center; }
.fav { width: 22px; height: 22px; background: #f5f5f5; color: #222; border-radius: 4px; }
tool-rail, side-rail { margin-top: 1px; }
`, `<title-bar></title-bar><top-toolbar></top-toolbar>
<main><tool-rail><button class="fav" aria-label="Favoritos"><line-icon name="star"></line-icon></button></tool-rail><div class="mid"><div class="charts"><div class="main"><price-plot></price-plot><price-axis></price-axis><time-axis></time-axis><div class="corner"><button aria-label="Ajustes"><line-icon name="hex"></line-icon></button></div></div><mini-chart></mini-chart></div><range-bar></range-bar><paper-bar></paper-bar></div><side-rail></side-rail></main><task-bar></task-bar>`);
</script>
</body>
</html>
